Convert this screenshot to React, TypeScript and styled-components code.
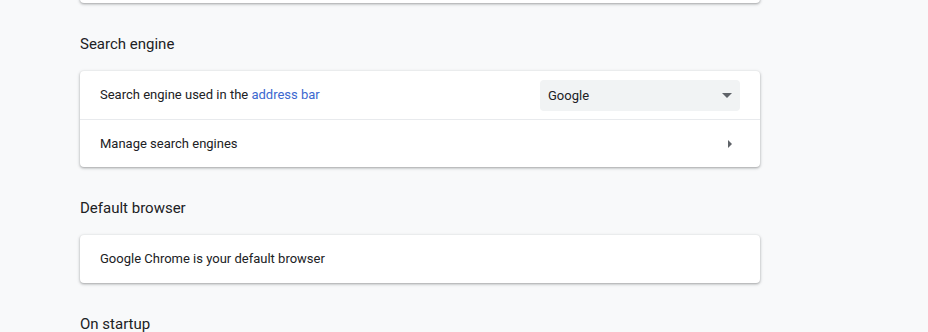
import React from "react";
import styled, { createGlobalStyle } from "styled-components";

const GlobalStyle = createGlobalStyle`
  html, body {
    margin: 0;
    padding: 0;
    background: #f8f9fa;
    overflow: hidden;
  }
  body {
    font-family: Roboto, "Liberation Sans", Arial, sans-serif;
    font-size: 13px;
    color: #202124;
  }
`;

const Viewport = styled.div`
  height: 332px;
  overflow: hidden;
`;

// content is scrolled: the previous card's bottom edge peeks in at the top
const Page = styled.main`
  width: 680px;
  margin: -45px 0 0 80px;
  padding-bottom: 40px;
`;

const Section = styled.section`
  display: flex;
  flex-direction: column;
`;

const SectionTitle = styled.h2`
  margin: 31px 0 17px;
  font-size: 15px;
  line-height: 20px;
  font-weight: 400;
  color: #202124;
`;

const Card = styled.div`
  background: #fff;
  border-radius: 4px;
  box-shadow: 0 1px 2px 0 rgba(60, 64, 67, 0.3), 0 1px 3px 1px rgba(60, 64, 67, 0.15);
`;

const Row = styled.div<{ $divider?: boolean; $clickable?: boolean }>`
  box-sizing: border-box;
  min-height: 48px;
  display: flex;
  align-items: center;
  justify-content: space-between;
  padding: 0 20px;
  border-top: ${(p) => (p.$divider ? "1px solid #e8eaed" : "none")};
  cursor: ${(p) => (p.$clickable ? "pointer" : "default")};
`;

const Label = styled.span`
  line-height: 20px;
`;

const Link = styled.a`
  color: #3b68cf;
  text-decoration: none;
`;

const Select = styled.div`
  box-sizing: border-box;
  width: 200px;
  height: 31px;
  display: flex;
  align-items: center;
  justify-content: space-between;
  padding: 0 8px;
  background: #f1f3f4;
  border-radius: 4px;
  color: #202124;
`;

const IconSlot = styled.span<{ $size: number }>`
  display: flex;
  align-items: center;
  justify-content: center;
  width: ${(p) => p.$size}px;
  height: 20px;
  color: #5f6368;
`;

const DownArrow = () => (
  <IconSlot $size={10}>
    <svg width="10" height="5" viewBox="0 0 10 5">
      <path d="M0 0h10L5 5z" fill="currentColor" />
    </svg>
  </IconSlot>
);

const RightArrow = () => (
  <IconSlot $size={20}>
    <svg width="4" height="8" viewBox="0 0 4 8">
      <path d="M0 0l4 4-4 4z" fill="currentColor" />
    </svg>
  </IconSlot>
);

export default function App() {
  return (
    <Viewport>
      <GlobalStyle />
      <Page>
        <Card>
          <Row />
        </Card>

        <Section>
          <SectionTitle>Search engine</SectionTitle>
          <Card>
            <Row>
              <Label>
                Search engine used in the <Link href="#">address bar</Link>
              </Label>
              <Select>
                <span>Google</span>
                <DownArrow />
              </Select>
            </Row>
            <Row $divider $clickable>
              <Label>Manage search engines</Label>
              <RightArrow />
            </Row>
          </Card>
        </Section>

        <Section>
          <SectionTitle>Default browser</SectionTitle>
          <Card>
            <Row>
              <Label>Google Chrome is your default browser</Label>
            </Row>
          </Card>
        </Section>

        <Section>
          <SectionTitle>On startup</SectionTitle>
          <Card>
            <Row />
          </Card>
        </Section>
      </Page>
    </Viewport>
  );
}
